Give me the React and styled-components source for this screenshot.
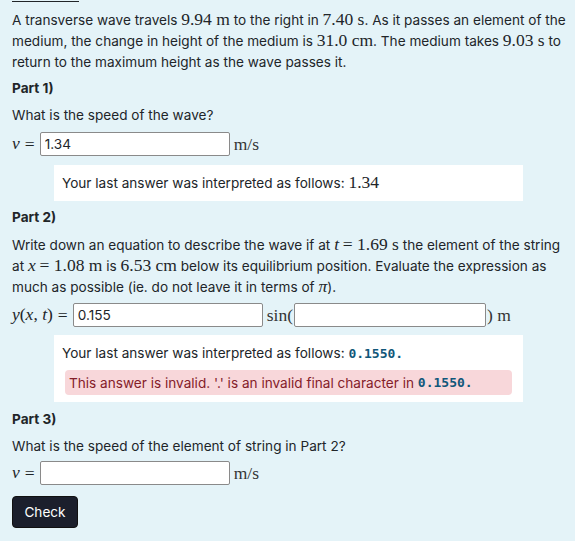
import styled, { createGlobalStyle } from "styled-components";

const GlobalStyle = createGlobalStyle`
  body {
    margin: 0;
    background: #e4f3f8;
    font-family: Inter, "Noto Sans", sans-serif;
    font-size: 13.6px;
    color: #212529;
  }
`;

const Page = styled.div`
  padding: 0 6px 0 12px;
  height: 541px;
  box-sizing: border-box;
`;

const TopLink = styled.a`
  display: block;
  width: fit-content;
  margin-top: -13px;
  line-height: 14px;
  color: #212529;
  text-decoration: none;
  border-bottom: 1px solid #212529;
`;

const Para = styled.p`
  margin: ${(p) => p.$top ?? 6}px 0 0;
  line-height: 21px;
`;

const PartTitle = styled.h4`
  margin: ${(p) => p.$top ?? 5}px 0 0;
  font-size: 13.6px;
  font-weight: 700;
  line-height: 21px;
`;

const M = styled.span`
  font-family: "Liberation Serif", "DejaVu Serif", serif;
  font-size: 17.5px;
  line-height: 1;
  font-style: ${(p) => (p.$i ? "italic" : "normal")};
`;

const Eq = styled.span`
  font-family: "Liberation Serif", "DejaVu Serif", serif;
  font-size: 17.5px;
  margin: 0 5px 0 5px;
`;

const Row = styled.div`
  display: flex;
  align-items: center;
  margin-top: ${(p) => p.$top ?? 6}px;
  height: 24px;
`;

const Label = styled.span`
  font-family: "Liberation Serif", "DejaVu Serif", serif;
  font-size: 17.5px;
  color: #333;
  white-space: nowrap;
  margin: 0 ${(p) => p.$r ?? 0}px 0 ${(p) => p.$l ?? 4}px;
`;

const Input = styled.input`
  box-sizing: border-box;
  width: ${(p) => p.$w || 190}px;
  height: 24px;
  border: 1px solid #8a8a8a;
  border-radius: 2px;
  padding: 0 4px;
  font-family: Inter, "Noto Sans", sans-serif;
  font-size: 13.6px;
  color: #212529;
  background: #fff;
  outline: none;
`;

const Feedback = styled.div`
  margin: ${(p) => p.$top ?? 9}px 0 0 42px;
  width: 469px;
  box-sizing: border-box;
  background: #fff;
  padding: 7.5px 11px ${(p) => p.$bottom ?? 7.5}px 8px;
`;

const FeedLine = styled.div`
  line-height: 21px;
  height: 21px;
`;

const Code = styled.code`
  font-family: "DejaVu Sans Mono", "Liberation Mono", monospace;
  font-weight: 700;
  font-size: 13px;
  color: #11577a;
`;

const ErrorBox = styled.div`
  margin: 6.5px 0 0 3px;
  height: 25px;
  display: flex;
  align-items: center;
  padding: 0 4px;
  background: #f8d7da;
  border-radius: 4px;
  color: #842029;
  white-space: pre;
`;

const Button = styled.button`
  margin-top: 11px;
  width: 66px;
  height: 32px;
  border: 1px solid #111;
  border-radius: 4px;
  background: #1b1f2c;
  color: #fff;
  font-family: Inter, "Noto Sans", sans-serif;
  font-size: 13.6px;
  cursor: pointer;
`;

export default function App() {
  return (
    <>
      <GlobalStyle />
      <Page>
        <TopLink>Question 1</TopLink>
        <Para $top={8}>
          A transverse wave travels <M>9.94 m</M> to the right in <M>7.40 s</M>. As it passes an
          element of the medium, the change in height of the medium is <M>31.0 cm</M>. The medium
          takes <M>9.03 s</M> to return to the maximum height as the wave passes it.
        </Para>

        <PartTitle>Part 1)</PartTitle>
        <Para>What is the speed of the wave?</Para>
        <Row $top={6}>
          <M $i>v</M>
          <Eq>=</Eq>
          <Input defaultValue="1.34" />
          <Label>m/s</Label>
        </Row>
        <Feedback>
          <FeedLine>
            Your last answer was interpreted as follows: <M>1.34</M>
          </FeedLine>
        </Feedback>

        <PartTitle $top={5.5}>Part 2)</PartTitle>
        <Para $top={7}>
          Write down an equation to describe the wave if at <M $i>t</M> <M>= 1.69 s</M> the element
          of the string at <M $i>x</M> <M>= 1.08 m</M> is <M>6.53 cm</M> below its equilibrium
          position. Evaluate the expression as much as possible (ie. do not leave it in terms of{" "}
          <M $i>π</M>).
        </Para>
        <Row $top={5.5}>
          <M>
            <i>y</i>(<i>x</i>, <i>t</i>)
          </M>
          <Eq>=</Eq>
          <Input defaultValue="0.155" />
          <Label $r={1}>sin(</Label>
          <Input $w={192} />
          <Label $l={1}>) m</Label>
        </Row>
        <Feedback $top={8} $bottom={7}>
          <FeedLine>
            Your last answer was interpreted as follows: <Code>0.1550.</Code>
          </FeedLine>
          <ErrorBox>
            This answer is invalid. '.' is an invalid final character in <Code>0.1550.</Code>
          </ErrorBox>
        </Feedback>

        <PartTitle $top={6.5}>Part 3)</PartTitle>
        <Para>What is the speed of the element of string in Part 2?</Para>
        <Row $top={4.5}>
          <M $i>v</M>
          <Eq>=</Eq>
          <Input />
          <Label>m/s</Label>
        </Row>
        <Button>Check</Button>
      </Page>
    </>
  );
}
